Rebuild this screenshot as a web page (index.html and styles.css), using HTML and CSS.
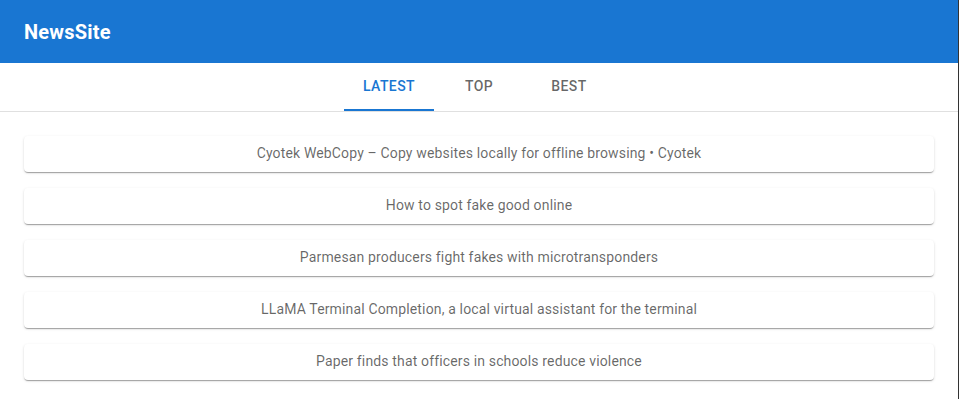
FILE: index.html
```html
<!DOCTYPE html>
<html lang="en">
<head>
    <meta charset="UTF-8">
    <meta name="viewport" content="width=device-width, initial-scale=1.0">
    <title>NewsSite</title>
    <link rel="stylesheet" href="styles.css">
</head>
<body>
    <div class="page">
        <header class="appbar">
            <h1 class="logo">NewsSite</h1>
        </header>
        <nav class="tabs">
            <button class="tab active">Latest</button>
            <button class="tab">Top</button>
            <button class="tab">Best</button>
        </nav>
        <main class="stories">
            <div class="story">Cyotek WebCopy – Copy websites locally for offline browsing • Cyotek</div>
            <div class="story">How to spot fake good online</div>
            <div class="story">Parmesan producers fight fakes with microtransponders</div>
            <div class="story">LLaMA Terminal Completion, a local virtual assistant for the terminal</div>
            <div class="story">Paper finds that officers in schools reduce violence</div>
        </main>
    </div>
</body>
</html>
```

FILE: styles.css
```css
* {
    margin: 0;
    padding: 0;
    box-sizing: border-box;
}
body {
    font-family: Roboto, "Liberation Sans", Arial, sans-serif;
    background-color: white;
    overflow: hidden;
}
.page {
    min-height: 100vh;
    border-right: 1px solid #333;
}
.appbar {
    height: 63px;
    background-color: #1976d2;
    display: flex;
    align-items: center;
    padding: 0 24px;
}
.logo {
    color: white;
    font-size: 20px;
    font-weight: 700;
    letter-spacing: 0.01em;
}
.tabs {
    display: flex;
    justify-content: center;
    height: 49px;
    border-bottom: 1px solid #e0e0e0;
}
.tab {
    min-width: 90px;
    height: 48px;
    padding: 12px 16px;
    border: none;
    border-bottom: 2px solid transparent;
    background: none;
    font-family: inherit;
    font-size: 14px;
    font-weight: 500;
    letter-spacing: 0.03em;
    text-transform: uppercase;
    color: rgba(0, 0, 0, 0.6);
    cursor: pointer;
}
.tab.active {
    color: #1976d2;
    border-bottom-color: #1976d2;
}
.stories {
    display: flex;
    flex-direction: column;
    gap: 16px;
    padding: 24px;
}
.story {
    background-color: white;
    border-radius: 4px;
    box-shadow: 0 2px 1px -1px rgba(0, 0, 0, 0.2), 0 1px 1px 0 rgba(0, 0, 0, 0.14), 0 1px 3px 0 rgba(0, 0, 0, 0.12);
    padding: 7px 8px 9px;
    line-height: 20px;
    font-size: 14px;
    letter-spacing: 0.15px;
    text-align: center;
    color: rgba(0, 0, 0, 0.6);
}
```
